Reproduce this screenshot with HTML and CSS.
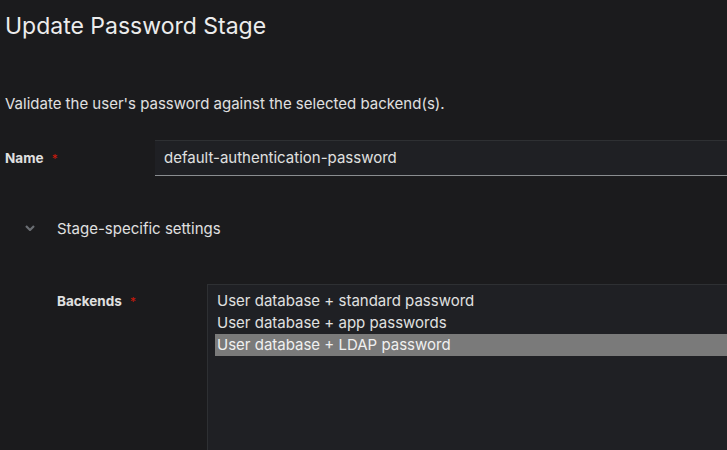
FILE: index.html
```html
<!DOCTYPE html>
<html lang="en">
<head>
<meta charset="utf-8">
<title>Update Password Stage</title>
<link rel="stylesheet" href="styles.css">
</head>
<body>
<div class="page">
  <h1 class="title">Update Password Stage</h1>
  <p class="desc">Validate the user's password against the selected backend(s).</p>
  <div class="row name-row">
    <label class="label">Name <span class="req">*</span></label>
    <div class="input">default-authentication-password</div>
  </div>
  <div class="section">
    <div class="section-toggle">
      <span class="chev"><svg width="10" height="6" viewBox="0 0 10 6"><path d="M1 1 L5 5 L9 1" fill="none" stroke="#6a6e73" stroke-width="2.2"/></svg></span>
      <span class="section-title">Stage-specific settings</span>
    </div>
    <div class="section-body">
      <div class="row backends-row">
        <label class="label label-top">Backends <span class="req">*</span></label>
        <div class="select">
          <div class="option">User database + standard password</div>
          <div class="option">User database + app passwords</div>
          <div class="option selected">User database + LDAP password</div>
        </div>
      </div>
    </div>
  </div>
</div>
</body>
</html>
```

FILE: styles.css
```css
html, body {
  margin: 0;
  padding: 0;
  background: #1b1b1d;
  overflow: hidden;
  height: 100%;
}
body {
  font-family: Inter, "Liberation Sans", sans-serif;
  color: #e0e0e0;
}
.page {
  padding: 8px 0 0 5px;
}
.title {
  margin: 0;
  font-size: 23px;
  line-height: 36px;
  font-weight: 400;
  color: #ececec;
}
.desc {
  margin: 48px 0 0;
  font-size: 15px;
  line-height: 24px;
}
.row {
  display: flex;
}
.name-row {
  margin-top: 24px;
  align-items: center;
}
.label {
  flex: 0 0 150px;
  font-size: 13.5px;
  font-weight: 700;
  line-height: 22px;
}
.req {
  color: #c9190b;
  font-weight: 400;
  font-size: 12px;
  margin-left: 5px;
}
.input {
  flex: 0 0 700px;
  box-sizing: border-box;
  height: 36px;
  padding: 0 9px;
  background: #1f2024;
  border-top: 1px solid #2e3033;
  border-bottom: 1px solid #8a8d90;
  font-size: 15px;
  line-height: 34px;
}
.section {
  margin-top: 32px;
}
.section-toggle {
  display: flex;
  align-items: center;
  height: 40px;
  padding-left: 20px;
}
.chev {
  display: flex;
  width: 32px;
}
.section-title {
  font-size: 15px;
}
.section-body {
  margin-top: 36px;
  padding-left: 52px;
}
.label-top {
  padding-top: 6px;
}
.select {
  flex: 0 0 600px;
  height: 220px;
  box-sizing: border-box;
  border: 1px solid #2e3033;
  background: #1f2024;
  padding: 5px 7px;
}
.option {
  font-size: 15px;
  line-height: 22px;
  padding-left: 2px;
}
.option.selected {
  background: #7a7a7a;
  color: #f0f0f0;
}
```
